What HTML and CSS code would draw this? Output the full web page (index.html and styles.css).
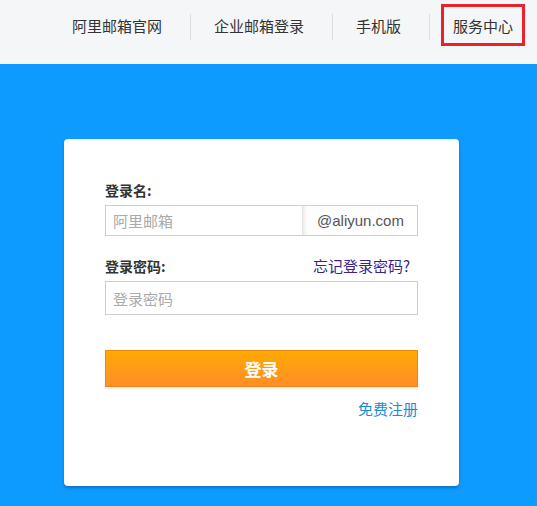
FILE: index.html
```html
<!DOCTYPE html>
<html lang="zh-CN">
  <head>
    <meta charset="utf-8">
    <title>阿里邮箱</title>
    <link rel="stylesheet" href="styles.css">
  </head>
  <body>
    <div class="top-bar">
      <ul class="top-nav">
        <li><a href="#">阿里邮箱官网</a></li>
        <li class="sep"></li>
        <li><a href="#">企业邮箱登录</a></li>
        <li class="sep"></li>
        <li><a href="#">手机版</a></li>
        <li class="sep"></li>
        <li><a class="current" href="#">服务中心</a></li>
      </ul>
    </div>
    <div class="main">
      <div class="login-box">
        <div class="field-label">登录名:</div>
        <div class="input-wrap">
          <input class="text-input" type="text" placeholder="阿里邮箱">
          <span class="suffix">@aliyun.com</span>
        </div>
        <div class="field-label pwd-label">
          <span>登录密码:</span>
          <a class="forgot" href="#">忘记登录密码?</a>
        </div>
        <div class="input-wrap pwd-wrap">
          <input class="text-input" type="password" placeholder="登录密码">
        </div>
        <button class="login-btn">登录</button>
        <div class="register"><a href="#">免费注册</a></div>
      </div>
    </div>
  </body>
</html>
```

FILE: styles.css
```css
html, body { margin: 0; padding: 0; }
body { font-family: "Liberation Sans", "Noto Sans CJK SC", sans-serif; background: #0e9bff; width: 537px; height: 506px; overflow: hidden; }
a { text-decoration: none; }

.top-bar { height: 64px; background: #f5f6f8; }
.top-nav { list-style: none; margin: 0; padding: 4px 12px 0 0; display: flex; justify-content: flex-end; align-items: flex-start; }
.top-nav a { display: block; box-sizing: border-box; height: 42px; line-height: 37px; padding: 0 9px; border: 3px solid transparent; color: #333; font-size: 15px; font-family: "Noto Sans CJK SC", sans-serif; }
.top-nav a.current { border-color: #e8232b; }
.top-nav .sep { width: 1px; height: 26px; margin: 10px 11px 0 16px; background: #dcdde0; }

.main { padding-top: 75px; }
.login-box { box-sizing: border-box; width: 395px; height: 347px; margin-left: 64px; padding: 41px 41px 0; background: #fff; border-radius: 4px; box-shadow: 0 2px 3px rgba(0, 0, 0, 0.25); }

.field-label { height: 20px; line-height: 20px; font-size: 14px; font-weight: bold; color: #333; font-family: "Noto Sans CJK SC", sans-serif; margin-bottom: 5px; }
.pwd-label { display: flex; justify-content: space-between; margin-top: 20px; margin-bottom: 5px; }
.forgot { font-weight: normal; font-size: 15px; color: #3d1f8e; margin-right: 8px; }

.input-wrap { display: flex; box-sizing: border-box; height: 31px; border: 1px solid #cfcfcf; }
.pwd-wrap { height: 34px; }
.text-input { flex: 1; min-width: 0; border: 0; outline: none; padding: 0 0 0 7px; font-size: 15px; color: #333; font-family: "Noto Sans CJK SC", sans-serif; background: transparent; }
.text-input::placeholder { color: #aaa; }
.suffix { width: 115px; box-sizing: border-box; padding-left: 14px; line-height: 29px; font-size: 15px; color: #555; border-left: 1px solid #e2e2e2; background: linear-gradient(to right, #ececec 0, #fdfdfd 4px, #fff 100%); }

.login-btn { display: block; width: 313px; height: 37px; margin-top: 35px; padding: 0; border: 1px solid #ef880e; background: linear-gradient(to bottom, #ffaa02, #ff8d29); color: #fff; font-size: 17px; font-weight: bold; font-family: "Noto Sans CJK SC", sans-serif; box-shadow: 0 2px 2px rgba(0, 0, 0, 0.08); cursor: pointer; }

.register { margin-top: 12px; text-align: right; line-height: 20px; }
.register a { font-size: 15px; color: #1a8bd5; font-family: "Noto Sans CJK SC", sans-serif; }
```
